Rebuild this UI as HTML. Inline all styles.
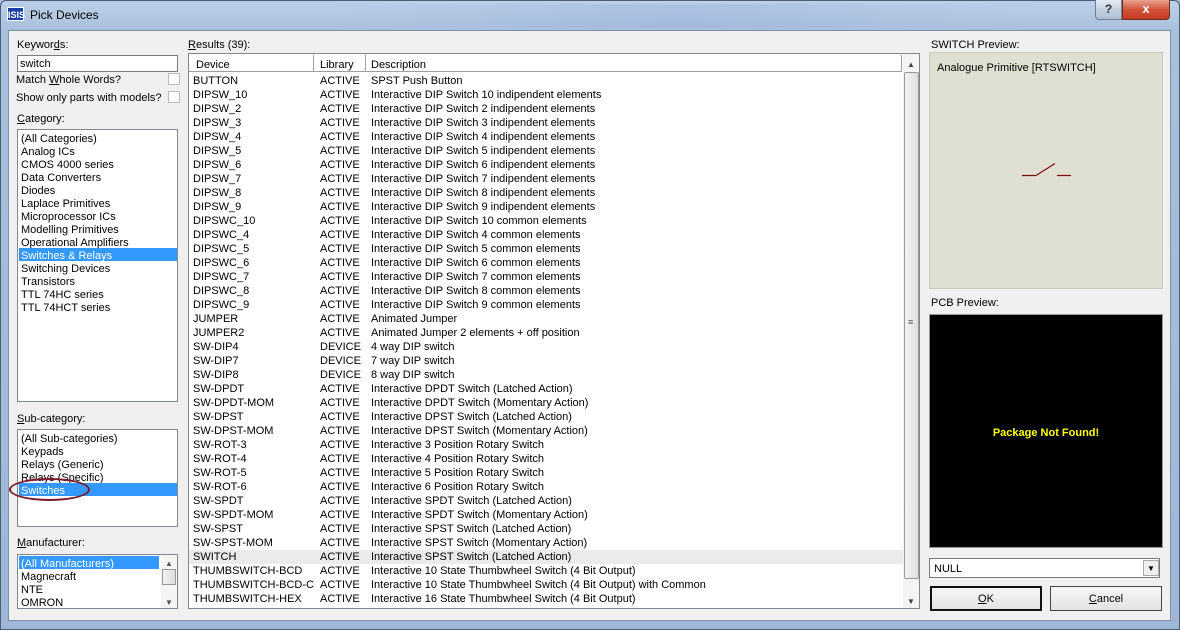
<!DOCTYPE html>
<html><head><meta charset="utf-8"><style>
*{box-sizing:border-box;margin:0;padding:0}
body{width:1180px;height:630px;overflow:hidden;background:#a9bfd9;font-family:"Liberation Sans",sans-serif;font-size:11px;color:#000;position:relative}
.a{position:absolute}
.t{position:absolute;white-space:nowrap;line-height:13px;margin-top:1px}
.box{position:absolute;background:#fff;border:1px solid #828790}
.sel{background:#3399ff;color:#fff}
u{text-decoration:underline}
</style></head><body>
<div class="a" style="left:0;top:0;width:1180px;height:630px;background:linear-gradient(#bcd0e8,#a8c0dc 30px,#9fb7d6);border-radius:6px 6px 0 0;border:1px solid #4a5e78"></div>
<div class="a" style="left:330px;top:4px;width:700px;height:24px;background:linear-gradient(90deg,rgba(255,255,255,0),rgba(150,170,220,.35),rgba(255,255,255,0))"></div>
<div class="a" style="left:7px;top:7px;width:17px;height:14px;background:#1b3fa8;color:#fff;font-size:9px;font-weight:bold;line-height:14px;text-align:center;border:1px solid #fff">ISIS</div>
<div class="t" style="left:30px;top:7px;font-size:12px;line-height:15px">Pick Devices</div>
<div class="a" style="left:1095px;top:0;width:27px;height:20px;border:1px solid #6f7f95;border-top:none;border-radius:0 0 0 4px;background:linear-gradient(#e4ebf4,#c3d0e0 50%,#aebfd4);text-align:center;font-weight:bold;color:#333;font-size:12px;line-height:18px">?</div>
<div class="a" style="left:1122px;top:0;width:48px;height:20px;border:1px solid #6e2b20;border-top:none;border-radius:0 0 4px 0;background:linear-gradient(#e8a38f,#d4543a 50%,#c23a22);text-align:center;font-weight:bold;color:#fff;font-size:13px;line-height:18px">x</div>
<div class="a" style="left:8px;top:30px;width:1163px;height:591px;background:#f0f0f0;border:1px solid #7f8fa5"></div>

<div class="t" style="left:17px;top:38px">Keywor<u>d</u>s:</div>
<div class="box" style="left:17px;top:55px;width:161px;height:17px;border-color:#7a7a7a"><span class="t" style="left:2px;top:1px">switch</span></div>
<div class="t" style="left:16px;top:73px">Match <u>W</u>hole Words?</div>
<div class="box" style="left:168px;top:73px;width:12px;height:12px;border-color:#bbb"></div>
<div class="t" style="left:16px;top:91px">Show only parts with models?</div>
<div class="box" style="left:168px;top:91px;width:12px;height:12px;border-color:#bbb"></div>
<div class="t" style="left:17px;top:112px"><u>C</u>ategory:</div>
<div class="box" style="left:17px;top:129px;width:161px;height:273px">
<div class="t" style="left:3px;top:2px">(All Categories)</div>
<div class="t" style="left:3px;top:15px">Analog ICs</div>
<div class="t" style="left:3px;top:28px">CMOS 4000 series</div>
<div class="t" style="left:3px;top:41px">Data Converters</div>
<div class="t" style="left:3px;top:54px">Diodes</div>
<div class="t" style="left:3px;top:67px">Laplace Primitives</div>
<div class="t" style="left:3px;top:80px">Microprocessor ICs</div>
<div class="t" style="left:3px;top:93px">Modelling Primitives</div>
<div class="t" style="left:3px;top:106px">Operational Amplifiers</div>
<div class="a sel" style="left:1px;top:118px;width:158px;height:13px"></div>
<div class="t" style="left:3px;top:119px;color:#fff">Switches &amp; Relays</div>
<div class="t" style="left:3px;top:132px">Switching Devices</div>
<div class="t" style="left:3px;top:145px">Transistors</div>
<div class="t" style="left:3px;top:158px">TTL 74HC series</div>
<div class="t" style="left:3px;top:171px">TTL 74HCT series</div>
</div>
<div class="t" style="left:17px;top:412px"><u>S</u>ub-category:</div>
<div class="box" style="left:17px;top:429px;width:161px;height:98px">
<div class="t" style="left:3px;top:2px">(All Sub-categories)</div>
<div class="t" style="left:3px;top:15px">Keypads</div>
<div class="t" style="left:3px;top:28px">Relays (Generic)</div>
<div class="t" style="left:3px;top:41px">Relays (Specific)</div>
<div class="a sel" style="left:1px;top:53px;width:158px;height:13px"></div>
<div class="t" style="left:3px;top:54px;color:#fff">Switches</div>
</div>
<div class="a" style="left:9px;top:478px;width:81px;height:23px;border:2px solid #7a1a2a;border-radius:50%"></div>
<div class="t" style="left:17px;top:536px"><u>M</u>anufacturer:</div>
<div class="box" style="left:17px;top:554px;width:161px;height:55px">
<div class="a sel" style="left:1px;top:1px;width:140px;height:13px"></div>
<div class="t" style="left:3px;top:2px;color:#fff">(All Manufacturers)</div>
<div class="t" style="left:3px;top:15px">Magnecraft</div>
<div class="t" style="left:3px;top:28px">NTE</div>
<div class="t" style="left:3px;top:41px">OMRON</div>
<div class="a" style="left:143px;top:0;width:16px;height:53px;background:#f4f4f4"></div>
<div class="t" style="left:147px;top:1px;font-size:8px;color:#555">▲</div>
<div class="a" style="left:144px;top:14px;width:14px;height:16px;border:1px solid #999;background:linear-gradient(90deg,#f2f2f2,#dcdcdc)"></div>
<div class="t" style="left:147px;top:40px;font-size:8px;color:#555">▼</div>
</div>

<div class="t" style="left:188px;top:38px"><u>R</u>esults (39):</div>
<div class="box" style="left:188px;top:53px;width:732px;height:556px;overflow:hidden">
<div class="a" style="left:0;top:1px;width:713px;height:17px;background:#fff;border-bottom:1px solid #a0a0a0"></div>
<div class="a" style="left:124px;top:1px;width:1px;height:17px;background:#a0a0a0"></div>
<div class="a" style="left:176px;top:1px;width:1px;height:17px;background:#a0a0a0"></div>
<div class="a" style="left:712px;top:1px;width:1px;height:17px;background:#a0a0a0"></div>
<div class="t" style="left:7px;top:4px">Device</div>
<div class="t" style="left:131px;top:4px">Library</div>
<div class="t" style="left:182px;top:4px">Description</div>
<div class="a" style="left:0;top:496px;width:714px;height:14px;background:#ebebeb"></div>
<div id="rows"></div>
<div class="a" style="left:714px;top:0;width:17px;height:554px;background:#f4f4f4"></div>
<div class="t" style="left:718px;top:3px;font-size:8px;color:#444">▲</div>
<div class="a" style="left:715px;top:18px;width:15px;height:507px;border:1px solid #9a9a9a;border-radius:2px;background:linear-gradient(90deg,#f4f4f4,#dedede)"></div>
<div class="t" style="left:719px;top:263px;font-size:9px;color:#555;line-height:9px">≡</div>
<div class="t" style="left:718px;top:540px;font-size:8px;color:#444">▼</div>
</div>

<div class="t" style="left:931px;top:38px">SWITCH Preview:</div>
<div class="a" style="left:929px;top:52px;width:234px;height:237px;background:#e0e0d2;border:1px solid #c8c8c0"></div>
<div class="t" style="left:937px;top:61px">Analogue Primitive [RTSWITCH]</div>
<svg class="a" style="left:1020px;top:160px" width="55" height="30"><path d="M2 15.5H16M16 15.5L35 3.5M37 15.5H51" stroke="#7a0c0c" stroke-width="1.2" fill="none"/></svg>
<div class="t" style="left:931px;top:296px">PCB Preview:</div>
<div class="a" style="left:929px;top:314px;width:234px;height:234px;background:#000;border:1px solid #999"></div>
<div class="t" style="left:929px;top:426px;width:234px;text-align:center;color:#ffff00;font-weight:bold">Package Not Found!</div>
<div class="box" style="left:929px;top:558px;width:231px;height:20px;border-color:#7a7a7a"><span class="t" style="left:4px;top:3px">NULL</span>
<div class="a" style="left:213px;top:1px;width:16px;height:16px;border:1px solid #aaa;background:#eee;text-align:center;font-size:8px;line-height:15px">▼</div></div>
<div class="a" style="left:930px;top:586px;width:112px;height:25px;border:2px solid #111;background:linear-gradient(#f6f6f6,#e4e4e4);text-align:center;line-height:23px"><u>O</u>K</div>
<div class="a" style="left:1050px;top:586px;width:112px;height:25px;border:1px solid #444;background:linear-gradient(#f6f6f6,#e4e4e4);text-align:center;line-height:25px"><u>C</u>ancel</div>

<script>
var d=[["BUTTON","ACTIVE","SPST Push Button"],["DIPSW_10","ACTIVE","Interactive DIP Switch 10 indipendent elements"],
["DIPSW_2","ACTIVE","Interactive DIP Switch 2 indipendent elements"],["DIPSW_3","ACTIVE","Interactive DIP Switch 3 indipendent elements"],
["DIPSW_4","ACTIVE","Interactive DIP Switch 4 indipendent elements"],["DIPSW_5","ACTIVE","Interactive DIP Switch 5 indipendent elements"],
["DIPSW_6","ACTIVE","Interactive DIP Switch 6 indipendent elements"],["DIPSW_7","ACTIVE","Interactive DIP Switch 7 indipendent elements"],
["DIPSW_8","ACTIVE","Interactive DIP Switch 8 indipendent elements"],["DIPSW_9","ACTIVE","Interactive DIP Switch 9 indipendent elements"],
["DIPSWC_10","ACTIVE","Interactive DIP Switch 10 common elements"],["DIPSWC_4","ACTIVE","Interactive DIP Switch 4 common elements"],
["DIPSWC_5","ACTIVE","Interactive DIP Switch 5 common elements"],["DIPSWC_6","ACTIVE","Interactive DIP Switch 6 common elements"],
["DIPSWC_7","ACTIVE","Interactive DIP Switch 7 common elements"],["DIPSWC_8","ACTIVE","Interactive DIP Switch 8 common elements"],
["DIPSWC_9","ACTIVE","Interactive DIP Switch 9 common elements"],["JUMPER","ACTIVE","Animated Jumper"],
["JUMPER2","ACTIVE","Animated Jumper 2 elements + off position"],["SW-DIP4","DEVICE","4 way DIP switch"],
["SW-DIP7","DEVICE","7 way DIP switch"],["SW-DIP8","DEVICE","8 way DIP switch"],
["SW-DPDT","ACTIVE","Interactive DPDT Switch (Latched Action)"],["SW-DPDT-MOM","ACTIVE","Interactive DPDT Switch (Momentary Action)"],
["SW-DPST","ACTIVE","Interactive DPST Switch (Latched Action)"],["SW-DPST-MOM","ACTIVE","Interactive DPST Switch (Momentary Action)"],
["SW-ROT-3","ACTIVE","Interactive 3 Position Rotary Switch"],["SW-ROT-4","ACTIVE","Interactive 4 Position Rotary Switch"],
["SW-ROT-5","ACTIVE","Interactive 5 Position Rotary Switch"],["SW-ROT-6","ACTIVE","Interactive 6 Position Rotary Switch"],
["SW-SPDT","ACTIVE","Interactive SPDT Switch (Latched Action)"],["SW-SPDT-MOM","ACTIVE","Interactive SPDT Switch (Momentary Action)"],
["SW-SPST","ACTIVE","Interactive SPST Switch (Latched Action)"],["SW-SPST-MOM","ACTIVE","Interactive SPST Switch (Momentary Action)"],
["SWITCH","ACTIVE","Interactive SPST Switch (Latched Action)"],["THUMBSWITCH-BCD","ACTIVE","Interactive 10 State Thumbwheel Switch (4 Bit Output)"],
["THUMBSWITCH-BCD-C","ACTIVE","Interactive 10 State Thumbwheel Switch (4 Bit Output) with Common"],["THUMBSWITCH-HEX","ACTIVE","Interactive 16 State Thumbwheel Switch (4 Bit Output)"],
["THUMBSWITCH-HEX-C","ACTIVE","Interactive 16 State Thumbwheel Switch (4 Bit Output) with Common"]];
var h="";d.forEach(function(r,i){var y=20+i*14;
h+='<div class="t" style="left:4px;top:'+y+'px">'+r[0]+'</div><div class="t" style="left:131px;top:'+y+'px">'+r[1]+'</div><div class="t" style="left:182px;top:'+y+'px">'+r[2]+'</div>';});
document.getElementById("rows").innerHTML=h;
</script>
</body></html>
